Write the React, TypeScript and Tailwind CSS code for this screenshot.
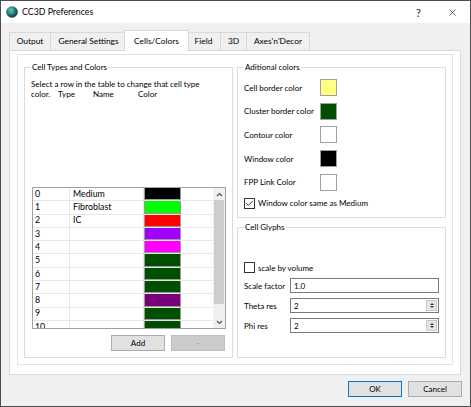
import { Check, X } from 'lucide-react';

const cellTypes = [
  { id: 0, name: 'Medium', color: '#000000' },
  { id: 1, name: 'Fibroblast', color: '#00ff00' },
  { id: 2, name: 'IC', color: '#ff0000' },
  { id: 3, name: '', color: '#a000ff' },
  { id: 4, name: '', color: '#ff00ff' },
  { id: 5, name: '', color: '#004f00' },
  { id: 6, name: '', color: '#004f00' },
  { id: 7, name: '', color: '#004f00' },
  { id: 8, name: '', color: '#7a007a' },
  { id: 9, name: '', color: '#004f00' },
  { id: 10, name: '', color: '#004f00' },
];

const extraColors = [
  { label: 'Cell border color', color: '#ffff80' },
  { label: 'Cluster border color', color: '#004f00' },
  { label: 'Contour color', color: '#ffffff' },
  { label: 'Window color', color: '#000000' },
  { label: 'FPP Link Color', color: '#ffffff' },
];

const tabs = [
  { label: 'Output', w: 'w-[42px]' },
  { label: 'General Settings', w: 'w-[77px]' },
  { label: 'Cells/Colors', w: 'w-[65px]', active: true },
  { label: 'Field', w: 'w-[35px]' },
  { label: '3D', w: 'w-[27px]' },
  { label: "Axes'n'Decor", w: 'w-[64px]' },
];

function CheckBox({ checked }: { checked?: boolean }) {
  return (
    <span className="w-[11px] h-[11px] border border-[#333] bg-white flex items-center justify-center flex-shrink-0">
      {checked && <Check className="w-[9px] h-[9px] text-[#222]" strokeWidth={2.5} />}
    </span>
  );
}

function SpinBox({ value }: { value: string }) {
  return (
    <div className="flex-1 h-[15px] border border-[#7a7a7a] bg-white flex items-center">
      <span className="flex-1 pl-[3px] leading-none">{value}</span>
      <span className="w-[11px] h-[11px] mr-[1px] bg-[#e6e6e6] border border-[#c8c8c8] flex flex-col items-center justify-center gap-[1px]">
        <span className="w-0 h-0 border-l-[2px] border-r-[2px] border-b-[2px] border-l-transparent border-r-transparent border-b-[#333]" />
        <span className="w-0 h-0 border-l-[2px] border-r-[2px] border-t-[2px] border-l-transparent border-r-transparent border-t-[#333]" />
      </span>
    </div>
  );
}

export default function App() {
  return (
    <div
      className="w-[471px] h-[407px] bg-[#f0f0f0] border border-[#4d4d4d] flex flex-col text-[8px] text-black"
      style={{ fontFamily: 'Lato, "Noto Sans", sans-serif' }}
    >
      {/* Title bar */}
      <div className="h-[22px] bg-white flex items-center pl-[5px] flex-shrink-0">
        <svg width="12" height="12" viewBox="0 0 12 12" className="flex-shrink-0">
          <defs>
            <radialGradient id="g" cx="40%" cy="35%" r="70%">
              <stop offset="0%" stopColor="#7fd1c0" />
              <stop offset="55%" stopColor="#1f6f7a" />
              <stop offset="100%" stopColor="#0d2f4a" />
            </radialGradient>
          </defs>
          <circle cx="6" cy="6" r="5.8" fill="url(#g)" />
          <path d="M2.5 5 Q4 3 5.5 4.5 T8 6 Q7 8.5 5 8 Z" fill="#3bb35a" opacity="0.9" />
        </svg>
        <span className="ml-[4px] text-[8.8px] leading-none">CC3D Preferences</span>
        <span className="ml-auto text-[11px] leading-none text-[#222] mr-[26px]">?</span>
        <X className="w-[11px] h-[11px] mr-[12px] text-[#222]" strokeWidth={1.5} />
      </div>

      {/* Tabs */}
      <div className="mt-[8px] h-[19px] flex items-end pl-[9px] flex-shrink-0 text-[8.4px]">
        {tabs.map((t) =>
          t.active ? (
            <div
              key={t.label}
              className={`${t.w} h-[21px] -mb-px -ml-[3px] -mr-[2px] bg-white border border-b-0 border-[#d9d9d9] relative z-10 flex items-center justify-center leading-none`}
            >
              {t.label}
            </div>
          ) : (
            <div
              key={t.label}
              className={`${t.w} h-[18px] -ml-px bg-[#f0f0f0] border border-b-0 border-[#d9d9d9] flex items-center justify-center leading-none`}
            >
              {t.label}
            </div>
          )
        )}
      </div>

      {/* Tab pane */}
      <div className="ml-[8px] w-[452px] h-[325px] bg-white border border-[#d9d9d9] pt-[3px] px-[7px] pb-[9px] flex-shrink-0">
        <div className="h-full border border-[#e3e3e3] bg-white px-[6px] pt-[7px] pb-[6px] flex gap-[4px]">
          {/* Left group */}
          <fieldset className="w-[209px] border border-[#dcdcdc] px-[6px] pb-[6px] flex flex-col">
            <legend className="px-[1px] leading-[11px]">Cell Types and Colors</legend>
            <div className="mt-[7px] leading-[9.5px]">
              <div>Select a row in the table to change that cell type</div>
              <div className="flex">
                <span className="w-[27px]">color.</span>
                <span className="w-[35px]">Type</span>
                <span className="w-[45px]">Name</span>
                <span>Color</span>
              </div>
            </div>
            <div className="flex-1" />
            {/* Table */}
            <div className="ml-[1px] w-[194px] h-[142px] border border-[#a0a0a0] bg-white flex overflow-hidden">
              <div className="flex-1 overflow-hidden">
                {cellTypes.map((c) => (
                  <div key={c.id} className="flex h-[13.3px] border-b border-[#e6e6e6] text-[8.8px] leading-none flex-shrink-0">
                    <div className="w-[37px] border-r border-[#e6e6e6] flex items-center pl-[2px]">{c.id}</div>
                    <div className="w-[74px] border-r border-[#e6e6e6] flex items-center pl-[3px]">{c.name}</div>
                    <div className="w-[37px] border border-[#9a9a9a] border-t-0" style={{ backgroundColor: c.color }} />
                  </div>
                ))}
              </div>
              <div className="w-[12px] bg-[#f0f0f0] flex flex-col items-center">
                <div className="h-[12px] flex items-center justify-center">
                  <svg width="7" height="5" viewBox="0 0 7 5"><path d="M1 4 L3.5 1.5 L6 4" fill="none" stroke="#555" strokeWidth="1.2" /></svg>
                </div>
                <div className="w-[10px] h-[104px] bg-[#cdcdcd]" />
                <div className="flex-1" />
                <div className="h-[12px] flex items-center justify-center">
                  <svg width="7" height="5" viewBox="0 0 7 5"><path d="M1 1 L3.5 3.5 L6 1" fill="none" stroke="#555" strokeWidth="1.2" /></svg>
                </div>
              </div>
            </div>
            <div className="mt-[6px] flex justify-end gap-[6px] pr-[1px]">
              <div className="w-[54px] h-[16px] bg-[#e1e1e1] border border-[#adadad] flex items-center justify-center leading-none">Add</div>
              <div className="w-[54px] h-[16px] bg-[#cccccc] border border-[#bfbfbf] flex items-center justify-center leading-none text-[#838383]">-</div>
            </div>
          </fieldset>

          {/* Right column */}
          <div className="w-[209px] flex flex-col gap-[4px]">
            <fieldset className="h-[156px] border border-[#dcdcdc] px-[6px] flex flex-col">
              <legend className="px-[1px] leading-[11px]">Aditional colors</legend>
              <div className="mt-[6px] flex flex-col gap-[6.7px]">
                {extraColors.map((e) => (
                  <div key={e.label} className="flex items-center h-[17px]">
                    <span className="w-[76px] leading-none">{e.label}</span>
                    <span className="w-[17px] h-[17px] border border-[#a0a0a0]" style={{ backgroundColor: e.color }} />
                  </div>
                ))}
              </div>
              <div className="mt-[7px] flex items-center gap-[3px] leading-none">
                <CheckBox checked />
                <span>Window color same as Medium</span>
              </div>
            </fieldset>
            <fieldset className="flex-1 border border-[#dcdcdc] px-[6px] flex flex-col">
              <legend className="px-[1px] leading-[11px]">Cell Glyphs</legend>
              <div className="mt-[29px] flex items-center gap-[3px] leading-none">
                <CheckBox />
                <span>scale by volume</span>
              </div>
              <div className="mt-[5px] flex items-center">
                <span className="w-[46px] leading-none">Scale factor</span>
                <div className="flex-1 h-[15px] border border-[#7a7a7a] bg-white flex items-center pl-[3px] leading-none">1.0</div>
              </div>
              <div className="mt-[5px] flex items-center">
                <span className="w-[46px] leading-none">Theta res</span>
                <SpinBox value="2" />
              </div>
              <div className="mt-[5px] flex items-center">
                <span className="w-[46px] leading-none">Phi res</span>
                <SpinBox value="2" />
              </div>
            </fieldset>
          </div>
        </div>
      </div>

      {/* Dialog buttons */}
      <div className="mt-[6px] flex justify-end gap-[6px] pr-[8px]">
        <div className="w-[54px] h-[16px] bg-[#e1e1e1] border border-[#0078d7] flex items-center justify-center leading-none">OK</div>
        <div className="w-[54px] h-[16px] bg-[#e1e1e1] border border-[#adadad] flex items-center justify-center leading-none">Cancel</div>
      </div>
    </div>
  );
}
